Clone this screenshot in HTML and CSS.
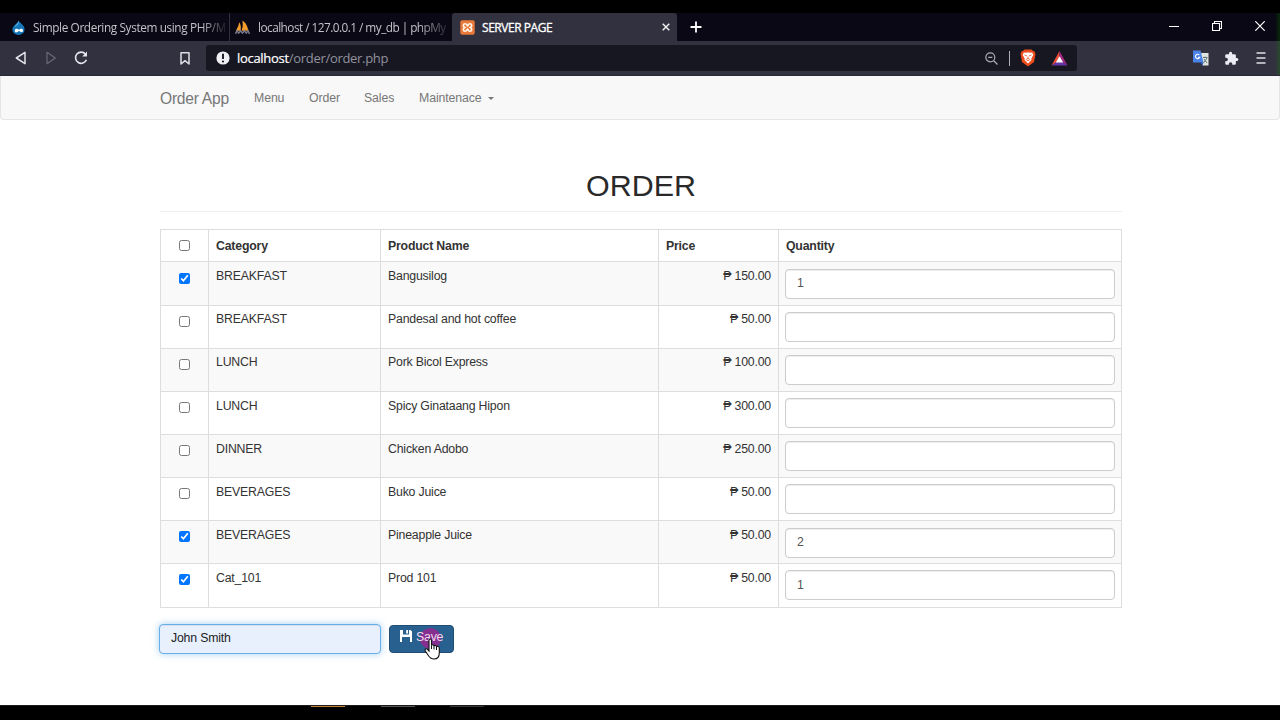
FILE: index.html
```html
<!DOCTYPE html>
<html lang="en">
<head>
<meta charset="utf-8">
<title>SERVER PAGE</title>
<link rel="stylesheet" href="styles.css">
</head>
<body>
<div class="screen">
  <div class="tabs">
    <div class="tab tab-first">
      <svg class="fav" viewBox="0 0 16 16"><path d="M8 0.5C8.6 3 14.5 5 14.5 10A6.3 5.8 0 0 1 1.5 10C1.5 6 7 4 8 0.5Z" fill="#1577b8"/><path d="M8 .5C8 3.500 5 5 4 7.500C6 5.500 9 5 8 .5Z" fill="#6cc0ec"/><path d="M4 11.500C4 8.500 7 9 8.500 10.300C10 9 13 8.500 12.800 11.500C12.500 14 10 12.500 8.500 11.700C6.500 13.500 4 14 4 11.500Z" fill="#fff"/></svg>
      <span class="title title-a">Simple Ordering System using PHP/M</span>
    </div>
    <div class="tab tab-second">
      <svg class="fav" viewBox="0 0 16 16"><path d="M1 11.500Q4 7 4.500 2.500Q7 6 6 11.500ZM7 11.500Q9 6 8 .5Q13.500 4.500 14 11.500Z" fill="#f39a2d"/><path d="M0.5 15L2 11.500L4 14L6 11.500L8 14L10 11.500L12 14L14 11.500L15.500 15" fill="none" stroke="#77778d" stroke-width="1.600"/></svg>
      <span class="title title-b">localhost / 127.0.0.1 / my_db | phpMy</span>
    </div>
    <div class="tab tab-active">
      <svg class="fav" viewBox="0 0 16 16"><rect x=".3" y=".3" width="15.400" height="15.400" rx="2" fill="#e9793a"/><path d="M5.500 4C3 4 3 7 5 8C3 9 3 12 5.500 12C7.500 12 7.500 9.800 8 9.800S8.500 12 10.500 12C13 12 13 9 11 8C13 7 13 4 10.500 4C8.500 4 8.500 6.200 8 6.200S7.500 4 5.500 4Z" fill="none" stroke="#fff4e6" stroke-width="1.800"/></svg>
      <span class="title title-c">SERVER PAGE</span>
      <svg class="close" viewBox="0 0 8 8"><path d="M.7.7L7.300 7.300M7.300.7L.7 7.300" stroke="#eee" stroke-width="1.500"/></svg>
    </div>
    <svg class="plus" viewBox="0 0 12 12"><path d="M6 .5V11.500M.5 6H11.500" stroke="#fff" stroke-width="1.800"/></svg>
    <div class="window-controls">
      <svg width="10" height="10" viewBox="0 0 10 10"><path d="M0 5.500H10" stroke="#fff"/></svg>
      <svg width="10" height="10" viewBox="0 0 10 10"><path d="M.5 2.500H7.500V9.500H.5ZM2.500 2.500V.5H9.500V7.500H7.500" fill="none" stroke="#fff" stroke-width="1.100"/></svg>
      <svg width="10" height="10" viewBox="0 0 10 10"><path d="M.3.3L9.700 9.700M9.700.3L.3 9.700" stroke="#fff" stroke-width="1.200"/></svg>
    </div>
  </div>

  <div class="toolbar">
    <svg class="back" viewBox="0 0 12 14"><path d="M10 1.300V12.700L1.300 7Z" fill="none" stroke="#e2e2ea" stroke-width="1.500" stroke-linejoin="round"/></svg>
    <svg class="forward" viewBox="0 0 12 14"><path d="M2 1.300V12.700L10.300 7Z" fill="none" stroke="#696977" stroke-width="1.200" stroke-linejoin="round"/></svg>
    <svg class="reload" viewBox="0 0 14 14"><path d="M11.500 3.200A5.600 5.600 0 1 0 12.400 8.700" fill="none" stroke="#e6e6ee" stroke-width="1.600"/><path d="M13 .6V5.500H8.200Z" fill="#e6e6ee"/></svg>
    <svg class="bookmark" viewBox="0 0 10 13"><path d="M1 .8H9V12L5 8.700L1 12Z" fill="none" stroke="#dedee6" stroke-width="1.500" stroke-linejoin="round"/></svg>
    <div class="address">
      <svg class="info" viewBox="0 0 14 14"><circle cx="7" cy="7" r="6.600" fill="#f0f0f4"/><path d="M7 2.800V8" stroke="#171722" stroke-width="1.900"/><circle cx="7" cy="10.500" r="1.100" fill="#171722"/></svg>
      <span class="url"><b>localhost</b>/order/order.php</span>
      <svg class="zoomout" viewBox="0 0 13 13"><circle cx="5.300" cy="5.300" r="4.500" fill="none" stroke="#a9a9b4" stroke-width="1.200"/><path d="M3.200 5.300H7.400M8.700 8.700L12.500 12.500" stroke="#a9a9b4" stroke-width="1.300"/></svg>
      <span class="divider"></span>
      <svg class="brave" viewBox="0 0 16 18"><path d="M4.500.5H11.500L13 2L14.500 2.200L15.500 5L14 13L8 17.500L2 13L.5 5L1.500 2.200L3 2Z" fill="#ec4d1c"/><path d="M3.800 3.500L6.200 3.800L8 3.300L9.800 3.800L12.200 3.500L13.300 6L11.300 9.500L11.500 11L8 14.500L4.500 11L4.700 9.500L2.700 6Z" fill="#fff"/><path d="M4.500 6L7 7M11.500 6L9 7M8 7.500V9.500M5.800 10.500L8 9.500L10.200 10.500M6.500 12L8 11.300L9.500 12" fill="none" stroke="#ec4d1c" stroke-width=".8"/></svg>
      <svg class="bat" viewBox="0 0 16 15"><path d="M8 0L0 14.500L8 9Z" fill="#f04d35"/><path d="M8 0L16 14.500L8 9Z" fill="#a52882"/><path d="M0 14.500H16L8 9Z" fill="#6237a8"/><path d="M8 5.300L11.700 11.500H4.300Z" fill="#fff"/></svg>
    </div>
    <svg class="translate" viewBox="0 0 16 16"><path d="M7 3H15.500V15.500H9.500Z" fill="#dfe4df"/><path d="M0 .5H7.500L10.500 12.500H0Z" fill="#4b83e8"/><path d="M7 12.500H10.500L9.500 15.500Z" fill="#2c57bd"/><path d="M6.300 5A2.200 2.200 0 1 0 6.700 7.200H5" fill="none" stroke="#fff" stroke-width="1.100"/><path d="M10 7.500H14.500M12.200 6.500V7.500M10.500 13L14 8M11 9L14 13" fill="none" stroke="#667780"/></svg>
    <svg class="puzzle" viewBox="0 0 24 24"><path d="M20.500 11H19V7a2 2 0 0 0-2-2h-4V3.500a2.500 2.500 0 0 0-5 0V5H4a2 2 0 0 0-2 2v3.800h1.500a2.700 2.700 0 0 1 0 5.400H2V20a2 2 0 0 0 2 2h3.800v-1.500a2.700 2.700 0 0 1 5.400 0V22H17a2 2 0 0 0 2-2v-4h1.500a2.500 2.500 0 0 0 0-5Z" fill="#ececf4"/></svg>
    <svg class="burger" viewBox="0 0 10 12"><path d="M.5 1H9.500M.5 6H9.500M.5 11H9.500" stroke="#dedee6" stroke-width="1.600"/></svg>
  </div>

  <main class="page">
    <nav class="navbar">
      <span class="brand">Order App</span>
      <span class="nav-menu">Menu</span>
      <span class="nav-order">Order</span>
      <span class="nav-sales">Sales</span>
      <span class="nav-drop">Maintenace<i class="caret"></i></span>
    </nav>
    <h1>ORDER</h1>
    <table>
      <colgroup><col class="c1"><col class="c2"><col class="c3"><col class="c4"><col class="c5"></colgroup>
      <thead><tr><th class="pick"><input type="checkbox"></th><th>Category</th><th>Product Name</th><th>Price</th><th>Quantity</th></tr></thead>
      <tbody>
        <tr class="tall"><td class="pick"><input type="checkbox" checked></td><td>BREAKFAST</td><td>Bangusilog</td><td class="price">₱ 150.00</td><td class="qty"><div class="field">1</div></td></tr>
        <tr class="raised"><td class="pick"><input type="checkbox"></td><td>BREAKFAST</td><td>Pandesal and hot coffee</td><td class="price">₱ 50.00</td><td class="qty"><div class="field"></div></td></tr>
        <tr class="raised"><td class="pick"><input type="checkbox"></td><td>LUNCH</td><td>Pork Bicol Express</td><td class="price">₱ 100.00</td><td class="qty"><div class="field"></div></td></tr>
        <tr><td class="pick"><input type="checkbox"></td><td>LUNCH</td><td>Spicy Ginataang Hipon</td><td class="price">₱ 300.00</td><td class="qty"><div class="field"></div></td></tr>
        <tr><td class="pick"><input type="checkbox"></td><td>DINNER</td><td>Chicken Adobo</td><td class="price">₱ 250.00</td><td class="qty"><div class="field"></div></td></tr>
        <tr><td class="pick"><input type="checkbox"></td><td>BEVERAGES</td><td>Buko Juice</td><td class="price">₱ 50.00</td><td class="qty"><div class="field"></div></td></tr>
        <tr class="lowered"><td class="pick"><input type="checkbox" checked></td><td>BEVERAGES</td><td>Pineapple Juice</td><td class="price">₱ 50.00</td><td class="qty"><div class="field">2</div></td></tr>
        <tr class="tall"><td class="pick"><input type="checkbox" checked></td><td>Cat_101</td><td>Prod 101</td><td class="price">₱ 50.00</td><td class="qty"><div class="field">1</div></td></tr>
      </tbody>
    </table>
    <div class="actions">
      <div class="customer">John Smith</div>
      <div class="save">
        <svg class="disk" viewBox="0 0 12 12"><path d="M0 0H3V4.500H9V0H10.500L12 1.500V12H10V7H2V12H0ZM6.200 0H8V3.500H6.200Z" fill="#fff"/></svg>
        <i class="click"></i>
        <span class="save-text">Save</span>
        <svg class="hand" viewBox="0 0 17 22"><path d="M5 13V2.500C5 .5 7.500.5 7.500 2.500V7.500C8 6.300 10 6.600 10 8C10.500 7 12.500 7.300 12.500 8.800C13 8 15.300 8.200 15.300 10V15C15.300 19 13 21 10 21C6.500 21 5.500 19.500 4 17L1.200 12.800C.5 11 2.500 10.200 3.500 11.300Z" fill="#fff" stroke="#111" stroke-width="1.100"/><path d="M7.500 7.500V11M10 8V11.500M12.500 9V12" stroke="#111"/></svg>
      </div>
    </div>
  </main>
  <footer class="taskbar"><i class="orange"></i><i class="grey"></i><i class="dim"></i></footer>
</div>
</body>
</html>
```
FILE: styles.css
```css
* { box-sizing: border-box; }
body { margin: 0; background: #000; font-family: "Liberation Sans", Arial, sans-serif; font-size: 12.3px; letter-spacing: -0.19px; color: #333; }
svg { display: block; flex: none; }
.screen { width: 1280px; height: 720px; padding-top: 13px; overflow: hidden; }

.tabs { display: flex; height: 28px; background: linear-gradient(90deg, transparent 1275px, #0a2a0c) #090814; font-family: "Open Sans", "Noto Sans", sans-serif; font-size: 12px; color: #c3c3ca; }
.tab { display: flex; align-items: center; height: 28px; white-space: nowrap; }
.tab-first { width: 229px; padding-left: 11px; }
.tab-second { width: 223px; padding-left: 5px; border-left: 1px solid #30303c; }
.tab-active { width: 225px; padding-left: 8px; background: #31313f; border-radius: 3px 3px 0 0; color: #fff; }
.fav { width: 15px; height: 15px; }
.title { margin-left: 7px; }
.title-a { width: 192px; font-size: 11.8px; letter-spacing: -0.38px; -webkit-mask-image: linear-gradient(90deg, #000 88%, rgba(0,0,0,.15)); }
.title-b { width: 190px; margin-left: 8px; font-size: 11.8px; letter-spacing: -0.53px; -webkit-mask-image: linear-gradient(90deg, #000 84%, rgba(0,0,0,.15)); }
.title-c { letter-spacing: -0.45px; -webkit-text-stroke: 0.3px #fff; }
.close { width: 8px; height: 8px; margin-left: auto; margin-right: 7px; }
.plus { width: 12px; height: 12px; margin: 8px 0 0 13px; }
.window-controls { display: flex; gap: 33px; margin-left: auto; padding: 8px 15px 0 0; }

.toolbar { display: flex; align-items: center; height: 35px; background: linear-gradient(90deg, transparent 1275px, #2a4a2c) #31313f; border-bottom: 1px solid #292936; padding-left: 15px; }
.back { width: 12px; height: 14px; }
.forward { width: 12px; height: 14px; margin-left: 18px; }
.reload { width: 14px; height: 14px; margin-left: 17px; }
.bookmark { width: 10px; height: 13px; margin-left: 92px; }
.address { display: flex; align-items: center; width: 871px; height: 26px; margin-left: 16px; padding-left: 10px; border-radius: 3px; background: #171722; }
.info { width: 14px; height: 14px; }
.url { margin-left: 7px; font-family: "Open Sans", "Noto Sans", sans-serif; font-size: 13px; color: #92929c; letter-spacing: -0.3px; }
.url b { color: #fff; font-weight: 400; -webkit-text-stroke: 0.2px #fff; }
.zoomout { width: 13px; height: 13px; margin-left: auto; }
.divider { width: 1px; height: 15px; margin-left: 11px; background: #b0b0ba; }
.brave { width: 16px; height: 18px; margin-left: 10px; }
.bat { width: 17px; height: 15px; margin: 0 9px 0 15px; }
.translate { width: 16px; height: 16px; margin-left: 116px; }
.puzzle { width: 15px; height: 15px; margin-left: 15px; }
.burger { width: 10px; height: 12px; margin-left: 17px; }

.page { height: 629px; background: #fff; overflow: hidden; }
.navbar { display: flex; height: 44px; padding: 0 0 1px 159px; line-height: 44px; background: #f8f8f8; border: 1px solid #e5e5e5; border-top: 0; border-radius: 0 0 4px 4px; color: #777; }
.brand { width: 94px; font-size: 15.6px; letter-spacing: -0.25px; padding-top: 1px; }
.nav-menu { width: 55px; }
.nav-order { width: 55px; }
.nav-sales { width: 55px; }
.nav-menu, .nav-order, .nav-sales, .nav-drop { letter-spacing: -0.1px; }
.caret { display: inline-block; margin-left: 6px; vertical-align: middle; border: 3.5px solid transparent; border-top-color: #777; border-bottom: 0; }
h1 { width: 962px; height: 92px; margin: 0 0 17px 160px; padding-top: 48px; border-bottom: 1px solid #eee; line-height: 35px; text-align: center; font-size: 30.4px; letter-spacing: 0; font-weight: 400; color: #292929; }

table { width: 962px; margin-left: 160px; table-layout: fixed; border-collapse: separate; border-spacing: 0; border-top: 1px solid #ddd; border-left: 1px solid #ddd; }
.c1 { width: 48px; }
.c2 { width: 172px; }
.c3 { width: 278px; }
.c4 { width: 120px; }
.c5 { width: 343px; }
th, td { height: 43px; padding: 5px 7px 0; border-right: 1px solid #ddd; border-bottom: 1px solid #ddd; text-align: left; vertical-align: top; line-height: 18px; }
th { height: 32px; padding-top: 7px; }
.tall td { height: 44px; }
.raised td { padding-top: 4px; }
tbody tr:nth-child(odd) { background: #f9f9f9; }
th.pick, tbody td.pick { padding: 10px 0 0 18px; }
.tall:first-child td.pick { padding-top: 11px; }
.pick input { display: block; width: 11px; height: 11px; margin: 0; }
td.price { text-align: right; padding-right: 7px; }
tbody td.qty { padding: 6px 6px 0; }
.field { width: 330px; height: 30px; padding: 0 11px; border: 1px solid #ccc; border-radius: 4px; background: #fff; box-shadow: inset 0 1px 1px rgba(0,0,0,.075); color: #555; line-height: 27px; }
.tall:first-child td.qty, .lowered td.qty { padding-top: 7px; }
.tall:last-child .field { line-height: 29px; }

.actions { display: flex; margin: 16px 0 0 159px; }
.customer { width: 222px; height: 30px; padding-left: 11px; border: 1px solid #66afe9; border-radius: 4px; background: #e8f0fe; box-shadow: inset 0 1px 1px rgba(0,0,0,.075), 0 0 7px rgba(102,175,233,.6); color: #222; line-height: 26px; }
.save { position: relative; display: flex; width: 65px; height: 28px; margin: 1px 0 0 8px; padding: 4px 0 0 10px; border: 1px solid #204d74; border-radius: 4px; background: #286090; color: #fff; line-height: 15px; }
.disk { width: 12px; height: 12px; }
.save-text { position: relative; margin-left: 4px; color: #f3d9ee; }
.click { position: absolute; left: 30px; top: 2px; width: 21px; height: 21px; border-radius: 50%; background: rgba(190,20,145,.62); }
.hand { position: absolute; left: 34px; top: 12px; width: 17px; height: 22px; }

.taskbar { display: flex; height: 15px; padding-left: 311px; border-top: 1px solid #1a1a1a; background: #000; }
.taskbar i { width: 34px; height: 1px; }
.orange { background: #c58435; }
.grey { margin-left: 36px; background: #555; }
.dim { margin-left: 35px; background: #333; }
```
